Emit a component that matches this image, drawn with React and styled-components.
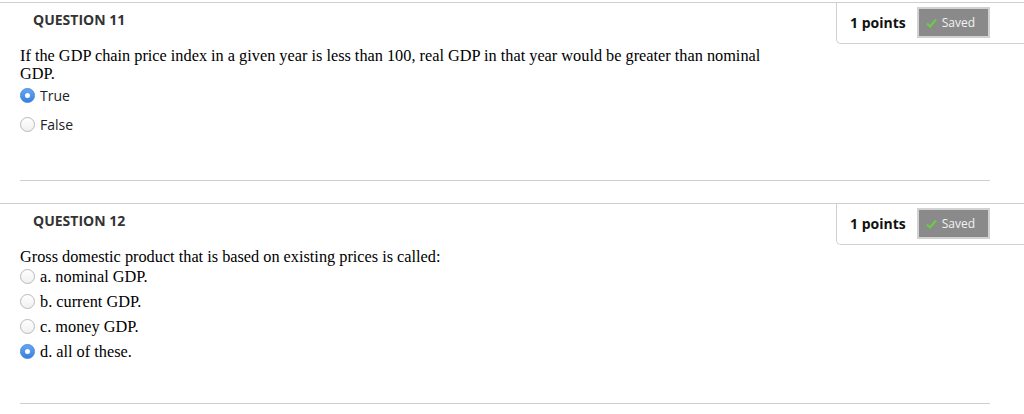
import React from 'react';
import styled, { createGlobalStyle } from 'styled-components';

const GlobalStyle = createGlobalStyle`
  body {
    margin: 0;
    padding-top: 2px;
    background: #fff;
    font-family: "Open Sans", "Liberation Sans", sans-serif;
    color: #000;
  }
`;

const Section = styled.section`
  border-top: 1px solid #cfcfcf;
  margin-bottom: ${p => p.gap}px;
`;

const Header = styled.div`
  display: flex;
  justify-content: space-between;
  align-items: flex-start;
  height: 41px;
`;

const Title = styled.h3`
  margin: 0;
  padding: 7px 0 0 33px;
  font-size: 14px;
  line-height: 19px;
  font-weight: 700;
  color: #333;
`;

const PointsBox = styled.div`
  display: flex;
  align-items: center;
  gap: 11px;
  height: 41px;
  box-sizing: border-box;
  width: 188px;
  padding: 0 0 1px 13px;
  border-left: 1px solid #d0d0d0;
  border-bottom: 1px solid #d0d0d0;
  border-bottom-left-radius: 5px;
`;

const Points = styled.span`
  font-size: 14px;
  font-weight: 700;
  color: #111;
`;

const Saved = styled.span`
  display: flex;
  align-items: center;
  gap: 5px;
  box-sizing: border-box;
  width: 73px;
  height: 31px;
  padding-left: 7px;
  background: #8a8a8a;
  border: 2px solid #d2d2d2;
  color: #f2f2f2;
  font-size: 12px;
`;

const Body = styled.div`
  padding: 3px 0 0 20px;
`;

const Prompt = styled.p`
  margin: 0;
  max-width: 752px;
  font-family: "Liberation Serif", "Times New Roman", serif;
  font-size: 16.3px;
  line-height: 18px;
`;

const Options = styled.div`
  display: flex;
  flex-direction: column;
  gap: ${p => p.gap}px;
  margin-top: ${p => p.shift}px;
`;

const Option = styled.label`
  display: flex;
  align-items: center;
  gap: 5px;
  height: ${p => p.h}px;
  font-family: ${p => p.serif ? '"Liberation Serif", "Times New Roman", serif' : '"Open Sans", "Liberation Sans", sans-serif'};
  font-size: ${p => p.serif ? 16.3 : 14}px;
  color: ${p => p.serif ? '#000' : '#222'};
`;

const Radio = styled.span`
  width: 15px;
  height: 15px;
  border-radius: 50%;
  box-sizing: border-box;
  flex-shrink: 0;
  display: flex;
  align-items: center;
  justify-content: center;
  border: 1px solid ${p => p.on ? '#3f86de' : '#b9b9b9'};
  background: ${p => p.on ? 'linear-gradient(#64a8f2, #3a80dc)' : 'linear-gradient(#fff, #f0f0f0)'};
  &::after {
    content: '';
    display: ${p => p.on ? 'block' : 'none'};
    width: 5px;
    height: 5px;
    border-radius: 50%;
    background: #fff;
  }
`;

const Rule = styled.hr`
  margin: ${p => p.top}px 34px 0 20px;
  border: 0;
  border-top: 1px solid #cfcfcf;
`;

const Check = () => (
  <svg width="11" height="10" viewBox="0 0 11 10">
    <path d="M1 5.5 L4 8.5 L10 1.5" fill="none" stroke="#6cc94a" strokeWidth="2.2" />
  </svg>
);

const questions = [
  {
    n: 11,
    text: 'If the GDP chain price index in a given year is less than 100, real GDP in that year would be greater than nominal GDP.',
    serif: false,
    h: 24,
    gap: 5,
    shift: 0,
    rule: 44,
    after: 22,
    options: [
      { label: 'True', on: true },
      { label: 'False', on: false },
    ],
  },
  {
    n: 12,
    text: 'Gross domestic product that is based on existing prices is called:',
    serif: true,
    h: 25,
    gap: 0,
    shift: -2,
    rule: 39,
    after: 0,
    options: [
      { label: 'a. nominal GDP.', on: false },
      { label: 'b. current GDP.', on: false },
      { label: 'c. money GDP.', on: false },
      { label: 'd. all of these.', on: true },
    ],
  },
];

function App() {
  return (
    <>
      <GlobalStyle />
      {questions.map(q => (
        <Section key={q.n} gap={q.after}>
          <Header>
            <Title>QUESTION {q.n}</Title>
            <PointsBox>
              <Points>1 points</Points>
              <Saved><Check />Saved</Saved>
            </PointsBox>
          </Header>
          <Body>
            <Prompt>{q.text}</Prompt>
            <Options gap={q.gap} shift={q.shift}>
              {q.options.map(o => (
                <Option key={o.label} h={q.h} serif={q.serif}>
                  <Radio on={o.on} />
                  {o.label}
                </Option>
              ))}
            </Options>
          </Body>
          <Rule top={q.rule} />
        </Section>
      ))}
    </>
  );
}

export default App;
